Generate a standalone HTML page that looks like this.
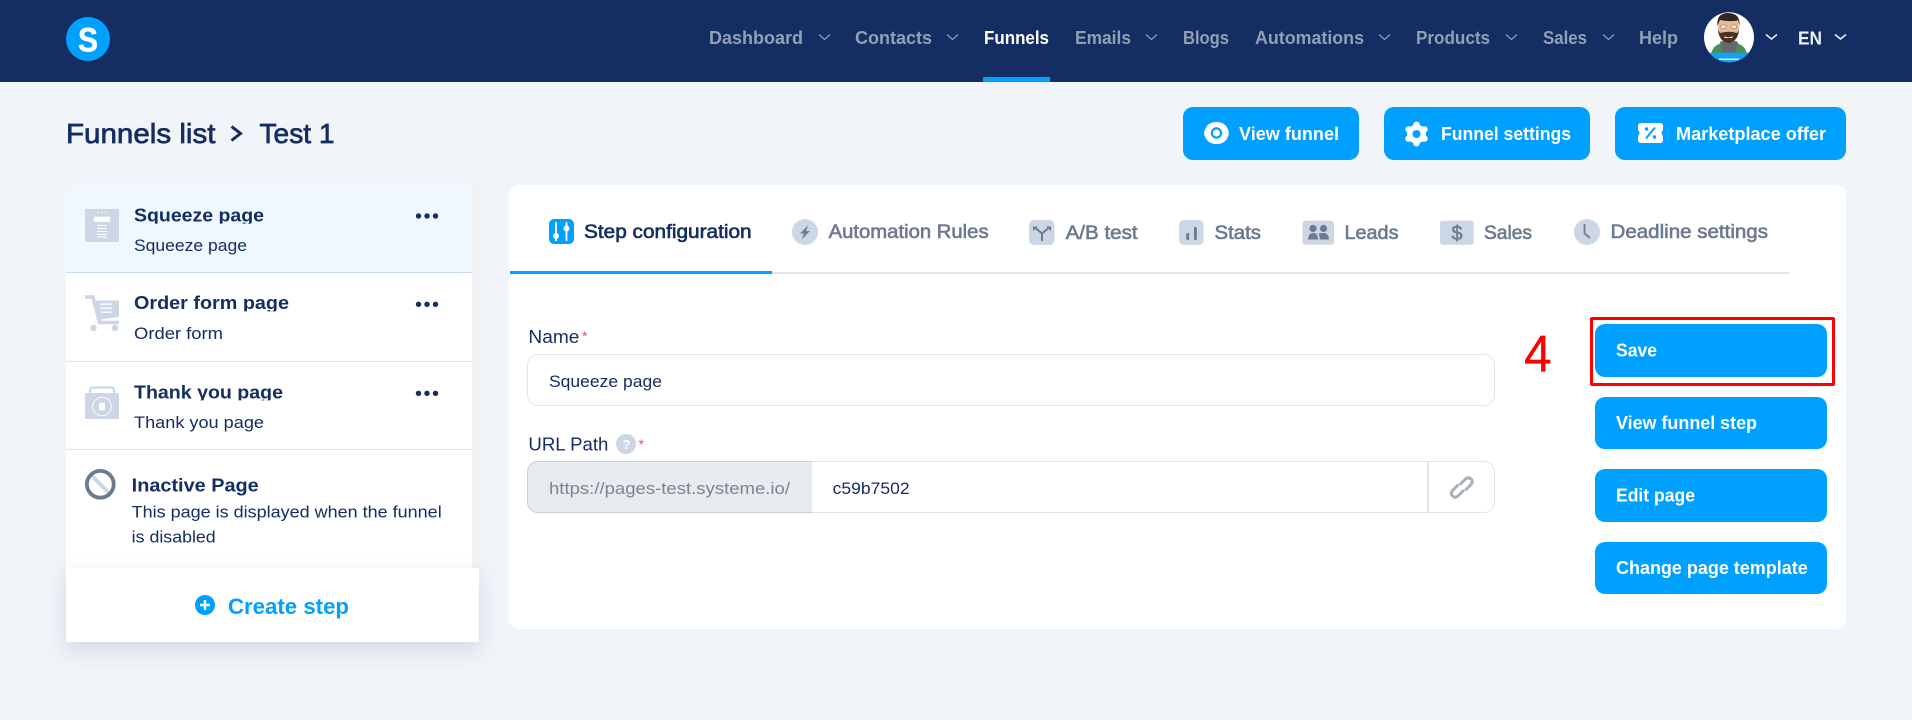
<!DOCTYPE html>
<html lang="en">
<head>
<meta charset="utf-8">
<title>Funnels list - Test 1</title>
<style>
html,body{margin:0;padding:0;width:1912px;height:720px;overflow:hidden;background:#f1f4f9;font-family:"Liberation Sans",sans-serif}
.b{position:absolute;box-sizing:border-box}
svg.layer{position:absolute;left:0;top:0}
text{font-family:"Liberation Sans",sans-serif;white-space:pre}
.nav{font-size:18px;font-weight:700;fill:#91a1b3}
.btn{font-size:18px;font-weight:700;fill:#fff}
.title{font-size:28px;fill:#142d63;stroke:#142d63;stroke-width:.7px}
.row{font-size:18px;font-weight:700;fill:#142d63}
.sub{font-size:17px;fill:#142d63}
.tab{font-size:19px;fill:#6b7a90;stroke:#6b7a90;stroke-width:.6px}
.lab{font-size:18px;fill:#142d63}
.ic{fill:#ccd6e4}
.dk{fill:#6b7a90}
.ch{fill:none;stroke:#8a9bad;stroke-width:1.3}
.chw{fill:none;stroke:#eef1f7;stroke-width:1.5}
</style>
</head>
<body>
<div class="b" style="left:0;top:0;width:1912px;height:82px;background:#142d63"></div>
<div class="b" style="left:983px;top:77px;width:67px;height:5px;background:#00a0ff"></div>

<div class="b" style="left:1183px;top:107px;width:176px;height:53px;background:#00a0ff;border-radius:10px"></div>
<div class="b" style="left:1384px;top:107px;width:206px;height:53px;background:#00a0ff;border-radius:10px"></div>
<div class="b" style="left:1615px;top:107px;width:231px;height:53px;background:#00a0ff;border-radius:10px"></div>

<div class="b" style="left:472px;top:185px;width:7px;height:383px;background:#f1f2f4;border-radius:4px 4px 0 0"></div>
<div class="b" style="left:66px;top:185px;width:406px;height:383px;background:#fff"></div>
<div class="b" style="left:66px;top:185px;width:406px;height:88px;background:#eff8ff;border-bottom:1px solid #c9d9ee"></div>
<div class="b" style="left:66px;top:361px;width:406px;height:1px;background:#dfe3ec"></div>
<div class="b" style="left:66px;top:449px;width:406px;height:1px;background:#dfe3ec"></div>
<div class="b" style="left:66px;top:568px;width:413px;height:74px;background:#fff;box-shadow:0 8px 20px rgba(40,60,100,.15)"></div>

<div class="b" style="left:509px;top:185px;width:1337px;height:444px;background:#fff;border-radius:10px"></div>
<div class="b" style="left:510px;top:272px;width:1279px;height:2px;background:#e2e5ea"></div>
<div class="b" style="left:510px;top:271px;width:262px;height:3px;background:#00a0ff"></div>

<div class="b" style="left:527px;top:354px;width:968px;height:52px;border:1.5px solid #e2e5ea;border-radius:11px;background:#fff"></div>
<div class="b" style="left:527px;top:461px;width:968px;height:52px;border:1.5px solid #e2e5ea;border-radius:11px;background:#fff"></div>
<div class="b" style="left:527px;top:461px;width:285px;height:52px;border:1.5px solid #c8cfd7;border-right:none;border-radius:11px 0 0 11px;background:#e8ebef"></div>
<div class="b" style="left:1427px;top:461px;width:2px;height:52px;background:#e2e5ea"></div>

<div class="b" style="left:1590px;top:317px;width:245px;height:69px;border:3.5px solid #f00;border-radius:2px"></div>
<div class="b" style="left:1595px;top:324px;width:232px;height:53px;background:#00a0ff;border-radius:10px"></div>
<div class="b" style="left:1595px;top:397px;width:232px;height:52px;background:#00a0ff;border-radius:10px"></div>
<div class="b" style="left:1595px;top:469px;width:232px;height:53px;background:#00a0ff;border-radius:10px"></div>
<div class="b" style="left:1595px;top:542px;width:232px;height:52px;background:#00a0ff;border-radius:10px"></div>

<svg class="layer" width="1912" height="720" viewBox="0 0 1912 720" xmlns="http://www.w3.org/2000/svg">
<defs>
<clipPath id="c1"><rect x="130" y="200" width="200" height="23.6"/></clipPath>
<clipPath id="c2"><rect x="130" y="290" width="200" height="21.4"/></clipPath>
<clipPath id="c3"><rect x="130" y="380" width="200" height="20.4"/></clipPath>
<clipPath id="av"><circle cx="1729" cy="37.3" r="25"/></clipPath>
</defs>

<!-- logo -->
<circle cx="88" cy="39" r="22" fill="#00a0ff"/>
<text x="78" y="51.5" font-size="34" font-weight="700" fill="#fff" stroke="#fff" stroke-width=".5" textLength="20" lengthAdjust="spacingAndGlyphs">S</text>

<!-- nav -->
<text class="nav" x="709" y="44" textLength="94" lengthAdjust="spacingAndGlyphs">Dashboard</text>
<polyline class="ch" points="819,34.5 824.5,39.5 830,34.5"/>
<text class="nav" x="855" y="44" textLength="77" lengthAdjust="spacingAndGlyphs">Contacts</text>
<polyline class="ch" points="947,34.5 952.5,39.5 958,34.5"/>
<text class="nav" x="984" y="44" textLength="65" lengthAdjust="spacingAndGlyphs" style="fill:#fff">Funnels</text>
<text class="nav" x="1075" y="44" textLength="56" lengthAdjust="spacingAndGlyphs">Emails</text>
<polyline class="ch" points="1146,34.5 1151.5,39.5 1157,34.5"/>
<text class="nav" x="1183" y="44" textLength="46" lengthAdjust="spacingAndGlyphs">Blogs</text>
<text class="nav" x="1255" y="44" textLength="109" lengthAdjust="spacingAndGlyphs">Automations</text>
<polyline class="ch" points="1379,34.5 1384.5,39.5 1390,34.5"/>
<text class="nav" x="1416" y="44" textLength="74" lengthAdjust="spacingAndGlyphs">Products</text>
<polyline class="ch" points="1506,34.5 1511.5,39.5 1517,34.5"/>
<text class="nav" x="1543" y="44" textLength="44" lengthAdjust="spacingAndGlyphs">Sales</text>
<polyline class="ch" points="1603,34.5 1608.5,39.5 1614,34.5"/>
<text class="nav" x="1639" y="44" textLength="39" lengthAdjust="spacingAndGlyphs">Help</text>

<!-- avatar -->
<circle cx="1729" cy="37.3" r="25" fill="#fff"/>
<g clip-path="url(#av)">
<path d="M1711 54 Q1713 45 1722 43 H1736 Q1745 45 1747 54 V60 H1711Z" fill="#4a9050"/>
<path d="M1720 42 Q1729 38 1738 42 L1735 53 H1723Z" fill="#66696c"/>
<ellipse cx="1728.5" cy="28" rx="10.5" ry="12.5" fill="#ecb88d"/>
<path d="M1718 30 Q1719 41.5 1728.5 43 Q1738 41.5 1739 30 L1737 33 Q1729 30.5 1720 33Z" fill="#4a3122"/>
<path d="M1724 36 Q1728.5 39 1733 36 L1732 38 H1725Z" fill="#fff"/>
<path d="M1717.5 26 Q1716 14 1727 13 Q1740.5 12.5 1739.5 26 L1738 20.5 Q1729 22 1720 20Z" fill="#2e2622"/>
<rect x="1720.5" y="25" width="5.5" height="3.5" rx="1.5" fill="#eee" stroke="#666" stroke-width=".5"/>
<rect x="1731" y="25" width="5.5" height="3.5" rx="1.5" fill="#eee" stroke="#666" stroke-width=".5"/>
<rect x="1704" y="52.7" width="50" height="10" fill="#12a0f0"/>
<rect x="1719" y="58.5" width="20" height="1.5" fill="#cfeaff"/>
</g>
<polyline class="chw" points="1766,34.5 1771.5,39 1777,34.5"/>
<text x="1798" y="44.5" font-size="18" font-weight="700" fill="#eef1f7" textLength="24" lengthAdjust="spacingAndGlyphs">EN</text>
<polyline class="chw" points="1835,34.5 1840.5,39 1846,34.5"/>

<!-- breadcrumb -->
<text class="title" x="66" y="143" textLength="149.5" lengthAdjust="spacingAndGlyphs">Funnels list</text>
<polyline points="231.5,126.5 240.5,133.5 231.5,140.5" fill="none" stroke="#142d63" stroke-width="3"/>
<text class="title" x="259.5" y="143" textLength="75" lengthAdjust="spacingAndGlyphs">Test 1</text>

<!-- top buttons -->
<path d="M1204 133 Q1206 122 1216.5 122 Q1227 122 1229 133 Q1227 144 1216.5 144 Q1206 144 1204 133Z" fill="#fff"/>
<circle cx="1216.5" cy="133" r="4.6" fill="#fff" stroke="#00a0ff" stroke-width="2.2"/>
<text class="btn" x="1239" y="140" textLength="100" lengthAdjust="spacingAndGlyphs">View funnel</text>

<g fill="#fff">
<circle cx="1416.5" cy="134" r="9.5"/>
<circle cx="1416.5" cy="124.8" r="3.2"/><circle cx="1416.5" cy="143.2" r="3.2"/>
<circle cx="1408.5" cy="129.4" r="3.2"/><circle cx="1424.5" cy="129.4" r="3.2"/>
<circle cx="1408.5" cy="138.6" r="3.2"/><circle cx="1424.5" cy="138.6" r="3.2"/>
</g>
<circle cx="1416.5" cy="134" r="4" fill="#00a0ff"/>
<text class="btn" x="1441" y="140" textLength="130" lengthAdjust="spacingAndGlyphs">Funnel settings</text>

<path d="M1641 123 H1660 Q1663 123 1663 126 V130 Q1660 133 1663 136 V140 Q1663 143 1660 143 H1641 Q1638 143 1638 140 V136 Q1641 133 1638 130 V126 Q1638 123 1641 123Z" fill="#fff"/>
<path d="M1655 127.5 L1646 138.5" stroke="#00a0ff" stroke-width="2"/>
<circle cx="1646.5" cy="129" r="1.7" fill="#00a0ff"/><circle cx="1654.5" cy="137" r="1.7" fill="#00a0ff"/>
<text class="btn" x="1676" y="140" textLength="150" lengthAdjust="spacingAndGlyphs">Marketplace offer</text>

<!-- list row 1 -->
<rect x="85" y="209" width="34" height="33" rx="1.5" class="ic"/>
<g fill="#fff"><circle cx="98" cy="212.5" r=".7"/><circle cx="102" cy="212.5" r=".7"/><circle cx="106" cy="212.5" r=".7"/>
<rect x="94" y="216.7" width="16" height="5.3"/>
<rect x="97" y="225" width="10" height="1"/><rect x="97" y="228" width="10" height="1"/><rect x="97" y="231" width="10" height="1"/><rect x="97" y="234" width="10" height="1"/><rect x="97" y="236.5" width="10" height="1"/></g>
<text class="row" x="134" y="221.5" clip-path="url(#c1)" textLength="130" lengthAdjust="spacingAndGlyphs">Squeeze page</text>
<text class="sub" x="134" y="251" textLength="113" lengthAdjust="spacingAndGlyphs">Squeeze page</text>
<g fill="#142d63"><circle cx="418.5" cy="216" r="2.7"/><circle cx="427" cy="216" r="2.7"/><circle cx="435.5" cy="216" r="2.7"/></g>

<!-- list row 2 -->
<path d="M85 297 H93 L99.5 322.5 H119" fill="none" stroke="#ccd6e4" stroke-width="3.6"/>
<path d="M92 300.5 H119 V317 L97 320Z" class="ic"/>
<g fill="#fff"><rect x="100" y="303.5" width="12" height="1.3"/><rect x="100" y="307.5" width="12" height="1.3"/><rect x="101" y="311.5" width="11" height="1.3"/></g>
<circle cx="93.5" cy="328" r="3.2" class="ic"/><circle cx="115" cy="328" r="3.2" class="ic"/>
<text class="row" x="134" y="309" clip-path="url(#c2)" textLength="155" lengthAdjust="spacingAndGlyphs">Order form page</text>
<text class="sub" x="134" y="339" textLength="89" lengthAdjust="spacingAndGlyphs">Order form</text>
<g fill="#142d63"><circle cx="418.5" cy="304.3" r="2.7"/><circle cx="427" cy="304.3" r="2.7"/><circle cx="435.5" cy="304.3" r="2.7"/></g>

<!-- list row 3 -->
<rect x="85" y="393" width="34" height="26" rx="1.5" class="ic"/>
<path d="M90 393 V390 Q90 387.5 93 387.5 H111 Q114 387.5 114 390 V393" fill="none" stroke="#ccd6e4" stroke-width="2.2"/>
<circle cx="102" cy="406.5" r="9.3" fill="none" stroke="#fff" stroke-width="1"/>
<rect x="99" y="403" width="6" height="7.5" rx="1" fill="#fff"/>
<text class="row" x="134" y="398.5" clip-path="url(#c3)" textLength="149" lengthAdjust="spacingAndGlyphs">Thank you page</text>
<text class="sub" x="134" y="428" textLength="130" lengthAdjust="spacingAndGlyphs">Thank you page</text>
<g fill="#142d63"><circle cx="418.5" cy="393.3" r="2.7"/><circle cx="427" cy="393.3" r="2.7"/><circle cx="435.5" cy="393.3" r="2.7"/></g>

<!-- list row 4 -->
<line x1="90.5" y1="474.5" x2="110" y2="494" stroke="#ccd6e4" stroke-width="4"/>
<circle cx="100.3" cy="484.3" r="13.4" fill="none" stroke="#6b7a90" stroke-width="3.8"/>
<text class="row" x="131.7" y="491.5" textLength="127" lengthAdjust="spacingAndGlyphs">Inactive Page</text>
<text class="sub" x="131.7" y="517.5" textLength="310" lengthAdjust="spacingAndGlyphs">This page is displayed when the funnel</text>
<text class="sub" x="131.7" y="542.5" textLength="84" lengthAdjust="spacingAndGlyphs">is disabled</text>

<!-- create step -->
<circle cx="205" cy="605" r="10" fill="#00a0ff"/>
<path d="M200 605 H210 M205 600 V610" stroke="#fff" stroke-width="2.4"/>
<text x="228" y="614" font-size="22" font-weight="700" fill="#00a0ff" textLength="121" lengthAdjust="spacingAndGlyphs">Create step</text>

<!-- tabs -->
<rect x="549" y="219" width="25" height="25" rx="5" fill="#00a0ff"/>
<path d="M556 222 V241 M566.5 222 V241" stroke="#fff" stroke-width="1.8"/>
<circle cx="556" cy="236" r="3" fill="#fff"/><circle cx="566.5" cy="228.5" r="3" fill="#fff"/>
<text class="tab" x="584" y="238" textLength="167.6" lengthAdjust="spacingAndGlyphs" style="fill:#142d63;stroke:#142d63">Step configuration</text>

<circle cx="805" cy="232" r="13" class="ic"/>
<path d="M808.5 225 L800 233.5 H804 L801.5 239.5 L810 231 H806Z" class="dk"/>
<text class="tab" x="828.6" y="238" textLength="160" lengthAdjust="spacingAndGlyphs">Automation Rules</text>

<rect x="1029" y="220" width="25.5" height="25" rx="5" class="ic"/>
<path d="M1042 241 V233.5 L1036 228.5 M1042 233.5 L1048 228.5" fill="none" stroke="#6b7a90" stroke-width="2"/>
<path d="M1033 231 V226.5 H1038Z M1051 231 V226.5 H1046Z" class="dk"/>
<text class="tab" x="1065.6" y="239" textLength="72" lengthAdjust="spacingAndGlyphs">A/B test</text>

<rect x="1179" y="220" width="24.6" height="25" rx="5" class="ic"/>
<rect x="1186.3" y="233" width="2.8" height="7" rx="1" class="dk"/><rect x="1194" y="227" width="2.8" height="13" rx="1" class="dk"/>
<text class="tab" x="1214.5" y="239" textLength="46.5" lengthAdjust="spacingAndGlyphs">Stats</text>

<rect x="1302.5" y="220.7" width="31.5" height="24" rx="3" class="ic"/>
<circle cx="1313" cy="228.5" r="3.6" class="dk"/><circle cx="1323.5" cy="228.5" r="3.6" class="dk"/>
<path d="M1308 239.5 Q1308.5 233 1313 233 Q1317 233 1317.5 236 L1318 239.5Z M1318.5 233.6 Q1320 233 1323.5 233 Q1328.5 233 1329 239.5 H1319.5 Q1320 236 1318.5 233.6Z" class="dk"/>
<text class="tab" x="1344.5" y="239" textLength="54" lengthAdjust="spacingAndGlyphs">Leads</text>

<rect x="1440" y="220.7" width="33.7" height="24" rx="2.5" class="ic"/>
<text x="1451.5" y="240" font-size="20" fill="#6b7a90" stroke="#6b7a90" stroke-width=".5" textLength="11" lengthAdjust="spacingAndGlyphs">$</text>
<text class="tab" x="1484" y="239" textLength="48" lengthAdjust="spacingAndGlyphs">Sales</text>

<circle cx="1587" cy="232" r="13" class="ic"/>
<path d="M1584.5 224 V233.5 L1590 238" fill="none" stroke="#6b7a90" stroke-width="1.8"/>
<text class="tab" x="1610.5" y="238" textLength="157.5" lengthAdjust="spacingAndGlyphs">Deadline settings</text>

<!-- form -->
<text class="lab" x="528.4" y="343" textLength="51" lengthAdjust="spacingAndGlyphs">Name</text>
<text x="582" y="341" font-size="14" fill="#f9466b">*</text>
<text x="549" y="387" font-size="17" fill="#142d63" textLength="113" lengthAdjust="spacingAndGlyphs">Squeeze page</text>
<text class="lab" x="528.4" y="450.5" textLength="80" lengthAdjust="spacingAndGlyphs">URL Path</text>
<circle cx="626" cy="444" r="10" class="ic"/>
<text x="622.5" y="449" font-size="13" font-weight="700" fill="#fff">?</text>
<text x="638.5" y="449" font-size="14" fill="#f9466b">*</text>
<text x="549" y="494" font-size="17" fill="#7b8490" textLength="241" lengthAdjust="spacingAndGlyphs">https://pages-test.systeme.io/</text>
<text x="832.6" y="494" font-size="17" fill="#142d63" textLength="77" lengthAdjust="spacingAndGlyphs">c59b7502</text>
<g fill="none" stroke="#a5b0bc" stroke-width="3" stroke-linecap="round">
<path d="M1460.5 484 L1465.5 479 Q1468.5 476.5 1471 479 Q1473.5 481.5 1471 484.5 L1466 489.5"/>
<path d="M1463 491 L1458 496 Q1455 498.5 1452.5 496 Q1450 493.5 1452.5 490.5 L1457.5 485.5"/>
</g>

<!-- side buttons -->
<text class="btn" x="1616" y="356.5" textLength="41" lengthAdjust="spacingAndGlyphs">Save</text>
<text class="btn" x="1616" y="429" textLength="141" lengthAdjust="spacingAndGlyphs">View funnel step</text>
<text class="btn" x="1616" y="501.5" textLength="79" lengthAdjust="spacingAndGlyphs">Edit page</text>
<text class="btn" x="1616" y="574" textLength="191.7" lengthAdjust="spacingAndGlyphs">Change page template</text>

<!-- annotation -->
<text x="1524" y="371.5" font-size="52" fill="#f00" stroke="#f00" stroke-width=".3" textLength="27.6" lengthAdjust="spacingAndGlyphs">4</text>
</svg>
</body>
</html>
